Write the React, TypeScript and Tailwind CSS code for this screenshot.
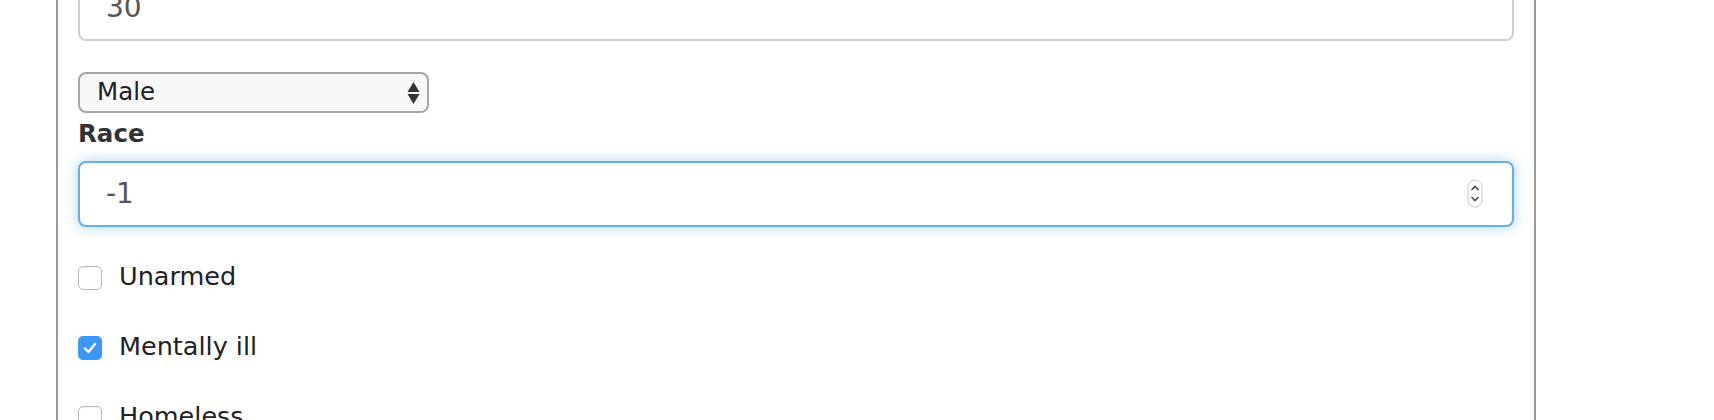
import React from "react";

function Spinner() {
  return (
    <svg width="16" height="30" viewBox="0 0 16 30" className="shrink-0">
      <rect x="1" y="1" width="14" height="27" rx="7" fill="#fff" stroke="#c8c8c8" strokeWidth="1" />
      <path d="M4.5 11 L8 7.5 L11.5 11" fill="none" stroke="#4a4a4a" strokeWidth="1.6" />
      <path d="M4.5 18 L8 21.5 L11.5 18" fill="none" stroke="#4a4a4a" strokeWidth="1.6" />
    </svg>
  );
}

function SelectArrows() {
  return (
    <svg width="13" height="22" viewBox="0 0 13 22">
      <path d="M6.5 0 L12.5 10 L0.5 10 Z" fill="#333" />
      <path d="M0.5 12 L12.5 12 L6.5 22 Z" fill="#333" />
    </svg>
  );
}

function Check({ label, checked }: { label: string; checked?: boolean }) {
  return (
    <label className="flex items-center h-[24px] gap-[17px]">
      {checked ? (
        <span className="flex h-[24px] w-[24px] items-center justify-center rounded-[5px] bg-[#3d97fb]">
          <svg width="14" height="12" viewBox="0 0 14 12">
            <path d="M2 6.5 L5.5 10 L12 2" fill="none" stroke="#fff" strokeWidth="2.4" strokeLinecap="round" strokeLinejoin="round" />
          </svg>
        </span>
      ) : (
        <span className="h-[24px] w-[24px] rounded-[5px] border border-[#b8b8b8] bg-white shadow-[inset_0_1px_1px_rgba(0,0,0,0.05)]" />
      )}
      <span className="text-[25.5px] leading-none text-[#222] -mt-[3px]">{label}</span>
    </label>
  );
}

export default function App() {
  return (
    <div className="h-[420px] w-full overflow-hidden bg-white font-['DejaVu_Sans',Verdana,sans-serif]">
      {/* flex column keeps the child's negative margin from collapsing through */}
      <div className="ml-[56px] flex h-full w-[1480px] flex-col border-x-2 border-[#9a9a9a] px-[20px]">
        <div className="-mt-[25px] flex flex-col">
          {/* Age */}
          <div className="flex h-[66px] shrink-0 items-center rounded-[8px] border-2 border-[#cfcfcf] bg-white pl-[26px] text-[28px] text-[#555]">
            30
          </div>

          {/* Gender */}
          <div className="mt-[31px] flex h-[41px] w-[351px] items-center justify-between rounded-[8px] border-2 border-[#a6a6a6] bg-[#f8f8f8] pl-[17px] pr-[7px] text-[24.5px] text-[#222]">
            <span className="-mt-[1px]">Male</span>
            <SelectArrows />
          </div>

          {/* Race */}
          <div className="mt-[7px] h-[28px] text-[24.5px] font-bold leading-[28px] text-[#333]">Race</div>
          <div className="mt-[13px] flex h-[66px] items-center justify-between rounded-[8px] border-2 border-[#66afe9] bg-white pl-[26px] pr-[29px] text-[28px] text-[#555] shadow-[0_0_14px_rgba(102,175,233,0.55)]">
            <span>-1</span>
            <Spinner />
          </div>

          {/* Flags */}
          <div className="mt-[39px] flex flex-col gap-[46px]">
            <Check label="Unarmed" />
            <Check label="Mentally ill" checked />
            <Check label="Homeless" />
          </div>
        </div>
      </div>
    </div>
  );
}
